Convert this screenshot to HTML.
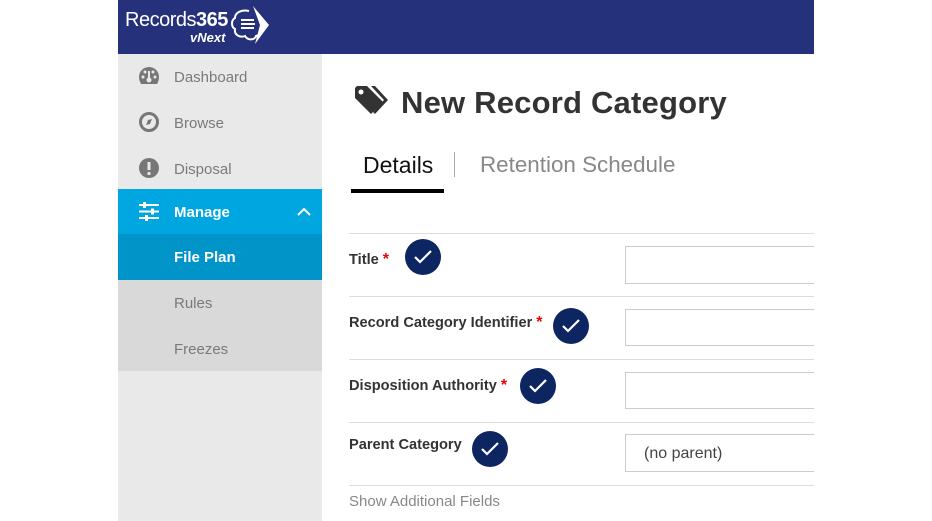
<!DOCTYPE html>
<html><head><style>
*{margin:0;padding:0;box-sizing:border-box}
body{width:932px;height:521px;background:#fff;position:relative;overflow:hidden;font-family:"Liberation Sans",Arial,sans-serif}
.a{position:absolute}
.hdr{left:118px;top:0;width:696px;height:54px;background:#25317b}
.side{left:118px;top:54px;width:204px;height:467px;background:#e9e9e9}
.nav{left:118px;width:204px;height:46px;font-size:15px;color:#7a7a7a;line-height:48px}
.nav span{position:absolute;left:56px}
.hr{left:349px;width:465px;height:1px;background:#dcdcdc}
.lbl{left:349px;font-size:14.6px;font-weight:bold;color:#333;line-height:18px}
.lbl b{color:#e00;font-size:16px;margin-left:4px}
.chk{width:36px;height:36px;border-radius:50%;background:#0d2560}
.chk svg{position:absolute;left:9px;top:10px}
.inp{left:625px;width:200px;border:1px solid #ccc;border-right:none}
</style></head><body>
<div class="a hdr"></div>
<div class="a" style="left:125px;top:9px;color:#fff;font-size:20px;letter-spacing:-0.5px">Records<b>365</b></div>
<div class="a" style="left:190px;top:30px;color:#fff;font-size:13px;font-style:italic;font-weight:bold">vNext</div>
<svg class="a" style="left:229px;top:5px" width="42" height="40" viewBox="0 0 42 40"><path d="M20 6 C12 4 6 8 6 13 C2 15 2 22 6 24 C5 30 11 33 16 31 C19 36 26 35 27 31 L32 29" fill="none" stroke="#fff" stroke-width="2"/><path d="M24 1 L40 20 L26 39 L31 20 Z" fill="#fff"/><path d="M12 15h13M12 19h14M12 23h13" stroke="#fff" stroke-width="2"/></svg>
<div class="a side"></div>
<div class="a nav" style="top:54px"><svg class="a" style="left:20px;top:12px" width="22" height="20" viewBox="0 0 22 20"><path d="M11 1A10 10 0 0 0 1 11c0 3 1 5 2 7h16c1-2 2-4 2-7A10 10 0 0 0 11 1z" fill="#777"/><circle cx="5" cy="11" r="1.5" fill="#e9e9e9"/><circle cx="7" cy="6" r="1.5" fill="#e9e9e9"/><circle cx="15" cy="6" r="1.5" fill="#e9e9e9"/><circle cx="17" cy="11" r="1.5" fill="#e9e9e9"/><path d="M11 5v8" stroke="#e9e9e9" stroke-width="2"/><circle cx="11" cy="14" r="2.5" fill="#e9e9e9"/></svg><span>Dashboard</span></div>
<div class="a nav" style="top:100px"><svg class="a" style="left:20px;top:11px" width="22" height="22" viewBox="0 0 22 22"><circle cx="11" cy="11" r="8.5" fill="none" stroke="#777" stroke-width="3"/><path d="M14 8l-2 5-4 1 2-5z" fill="#777"/></svg><span>Browse</span></div>
<div class="a nav" style="top:146px"><svg class="a" style="left:20px;top:11px" width="22" height="22" viewBox="0 0 22 22"><circle cx="11" cy="11" r="10" fill="#777"/><path d="M11 5v8" stroke="#e9e9e9" stroke-width="3"/><circle cx="11" cy="16.5" r="1.6" fill="#e9e9e9"/></svg><span>Disposal</span></div>
<div class="a nav" style="top:189px;height:45px;line-height:47px;background:#00a6e0;color:#fff;font-weight:bold"><svg class="a" style="left:21px;top:13px" width="20" height="19" viewBox="0 0 20 19"><path d="M0 3h20M0 9.5h20M0 16h20" stroke="#fff" stroke-width="2"/><rect x="4" y="0" width="3" height="6" fill="#fff"/><rect x="12" y="6.5" width="3" height="6" fill="#fff"/><rect x="6" y="13" width="3" height="6" fill="#fff"/></svg><span>Manage</span><svg class="a" style="left:179px;top:18px" width="14" height="9" viewBox="0 0 14 9"><path d="M1 8l6-6 6 6" fill="none" stroke="#fff" stroke-width="2"/></svg></div>
<div class="a nav" style="top:234px;background:#0094c9;color:#fff;font-weight:bold"><span>File Plan</span></div>
<div class="a nav" style="top:280px;background:#d9d9d9;height:46px"><span>Rules</span></div>
<div class="a nav" style="top:326px;background:#d9d9d9;height:45px"><span>Freezes</span></div>
<svg class="a" style="left:354px;top:86px" width="34" height="32" viewBox="0 0 34 32"><path d="M1 2v10l16 16 12-12L13 0H3z" fill="#333"/><circle cx="7" cy="6" r="2.5" fill="#fff"/><path d="M17 0h4l13 14-13 14-2-2 11-12z" fill="#333"/></svg>
<div class="a" style="left:401px;top:85px;font-size:31px;font-weight:bold;color:#333;letter-spacing:0.2px">New Record Category</div>
<div class="a" style="left:363px;top:152px;font-size:23px;color:#111">Details</div>
<div class="a" style="left:454px;top:152px;width:1px;height:25px;background:#aaa"></div>
<div class="a" style="left:480px;top:152px;font-size:22.4px;color:#888">Retention Schedule</div>
<div class="a" style="left:351px;top:189px;width:93px;height:4px;background:#000"></div>
<div class="a hr" style="top:233px"></div>
<div class="a hr" style="top:296px"></div>
<div class="a hr" style="top:359px"></div>
<div class="a hr" style="top:422px"></div>
<div class="a hr" style="top:485px"></div>
<div class="a lbl" style="top:251px">Title<b>*</b></div>
<div class="a lbl" style="top:314px">Record Category Identifier<b>*</b></div>
<div class="a lbl" style="top:377px">Disposition Authority<b>*</b></div>
<div class="a lbl" style="top:436px">Parent Category</div>
<div class="a chk" style="left:405px;top:239px"><svg width="18" height="16" viewBox="0 0 18 16"><path d="M1 8l5 5L17 2" fill="none" stroke="#fff" stroke-width="2.2"/></svg></div>
<div class="a chk" style="left:553px;top:308px"><svg width="18" height="16" viewBox="0 0 18 16"><path d="M1 8l5 5L17 2" fill="none" stroke="#fff" stroke-width="2.2"/></svg></div>
<div class="a chk" style="left:520px;top:368px"><svg width="18" height="16" viewBox="0 0 18 16"><path d="M1 8l5 5L17 2" fill="none" stroke="#fff" stroke-width="2.2"/></svg></div>
<div class="a chk" style="left:472px;top:431px"><svg width="18" height="16" viewBox="0 0 18 16"><path d="M1 8l5 5L17 2" fill="none" stroke="#fff" stroke-width="2.2"/></svg></div>
<div class="a inp" style="top:246px;height:38px"></div>
<div class="a inp" style="top:309px;height:37px"></div>
<div class="a inp" style="top:372px;height:37px"></div>
<div class="a inp" style="top:434px;height:38px;font-size:16px;color:#444;padding:10px 0 0 18px">(no parent)</div>
<div class="a" style="left:814px;top:0;width:118px;height:521px;background:#fff"></div>
<div class="a" style="left:349px;top:493px;font-size:15px;color:#888">Show Additional Fields</div>
</body></html>
